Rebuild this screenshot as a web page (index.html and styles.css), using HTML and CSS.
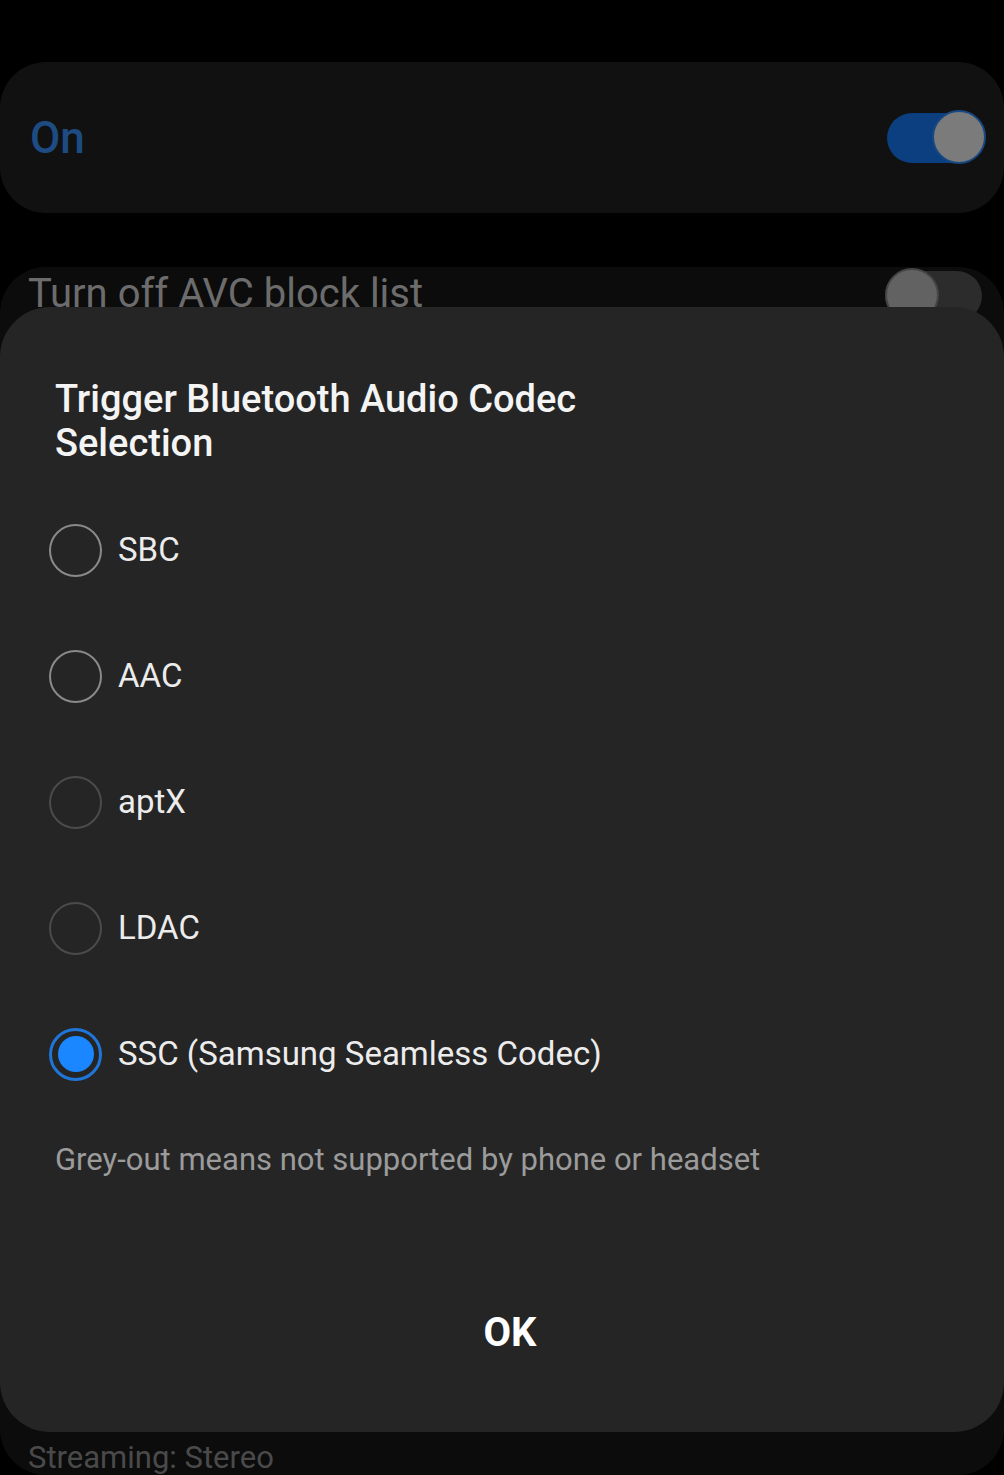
FILE: index.html
```html
<!DOCTYPE html>
<html>
<head>
<meta charset="utf-8">
<link rel="stylesheet" href="styles.css">
</head>
<body>
<div class="page">
  <div class="topbar"></div>
  <div class="card card-on">
    <span class="on-label">On</span>
    <span class="switch switch-on"><span class="thumb"></span></span>
  </div>
  <div class="card card-list">
    <div class="setting-row">
      <span class="setting-title">Turn off AVC block list</span>
      <span class="switch switch-off"><span class="thumb"></span></span>
    </div>
    <div class="hidden-space"></div>
    <div class="setting-sub">Streaming: Stereo</div>
  </div>

  <div class="dialog">
    <h1 class="dialog-title">Trigger Bluetooth Audio Codec<br>Selection</h1>
    <div class="options">
      <div class="option"><span class="radio"></span><span class="opt-label">SBC</span></div>
      <div class="option"><span class="radio"></span><span class="opt-label">AAC</span></div>
      <div class="option"><span class="radio radio-disabled"></span><span class="opt-label">aptX</span></div>
      <div class="option"><span class="radio radio-disabled"></span><span class="opt-label">LDAC</span></div>
      <div class="option"><span class="radio radio-checked"><span class="dot"></span></span><span class="opt-label">SSC (Samsung Seamless Codec)</span></div>
    </div>
    <p class="hint">Grey-out means not supported by phone or headset</p>
    <div class="actions"><span class="ok">OK</span></div>
  </div>
</div>
</body>
</html>
```
FILE: styles.css
```css
html, body {
  margin: 0;
  padding: 0;
  background: #000;
}
body {
  font-family: Roboto, "Noto Sans", "Liberation Sans", sans-serif;
  width: 1004px;
  height: 1475px;
  overflow: hidden;
}
.page {
  position: relative;
  height: 1475px;
  overflow: hidden;
}
.topbar {
  height: 62px;
}
.card {
  border-radius: 46px;
}
.card-on {
  background: #111111;
  height: 151px;
  display: flex;
  align-items: center;
  justify-content: space-between;
  padding: 0 20px 0 30px;
  box-sizing: border-box;
}
.on-label {
  color: #1d4b82;
  font-size: 44px;
  font-weight: 500;
  line-height: 1;
}
.switch {
  position: relative;
  width: 97px;
  height: 50px;
  border-radius: 25px;
  display: block;
}
.switch .thumb {
  position: absolute;
  top: -3px;
  width: 54px;
  height: 54px;
  border-radius: 50%;
  box-sizing: border-box;
}
.switch-on {
  background: #0b3f80;
}
.switch-on .thumb {
  right: -2px;
  background: #7b7b7b;
  border: 2px solid #174882;
}
.switch-off {
  background: #2c2c2c;
}
.switch-off .thumb {
  left: 0;
  background: #626262;
  border: 2px solid #454545;
}
.card-list {
  margin-top: 54px;
  background: #0c0c0c;
  height: 1208px;
  overflow: hidden;
}
.setting-row {
  display: flex;
  align-items: flex-start;
  justify-content: space-between;
  padding: 4px 22px 0 28px;
  height: 62px;
  box-sizing: border-box;
}
.setting-title {
  color: #6c6c6c;
  font-size: 40px;
  line-height: 46px;
}
.switch-off {
  margin-top: 0;
}
.hidden-space {
  height: 1111px;
}
.setting-sub {
  padding-left: 28px;
  color: #4a4a4a;
  font-size: 31px;
  line-height: 36px;
}
.dialog {
  position: absolute;
  top: 307px;
  left: 0;
  right: 0;
  height: 1125px;
  background: #252525;
  border-radius: 50px;
  padding: 70px 0 0 0;
  box-sizing: border-box;
}
.dialog-title {
  margin: 0;
  padding-left: 55px;
  font-size: 38px;
  line-height: 44px;
  font-weight: 500;
  color: #f4f4f4;
}
.options {
  margin-top: 22px;
  padding-left: 49px;
}
.option {
  height: 126px;
  display: flex;
  align-items: center;
  gap: 16px;
}
.radio {
  width: 53px;
  height: 53px;
  border-radius: 50%;
  border: 2.5px solid #8a8a8a;
  box-sizing: border-box;
  display: flex;
  align-items: center;
  justify-content: center;
  flex: none;
}
.radio-disabled {
  border-color: #4b4b4b;
}
.radio-checked {
  border: 3px solid #1f76d8;
}
.radio-checked .dot {
  width: 36px;
  height: 36px;
  border-radius: 50%;
  background: #1a86ff;
}
.opt-label {
  color: #ececec;
  font-size: 33px;
  line-height: 40px;
}
.hint {
  margin: 25px 0 0 0;
  padding-left: 55px;
  color: #9b9b9b;
  font-size: 31px;
  line-height: 36px;
}
.actions {
  margin-top: 130px;
  display: flex;
  justify-content: center;
  padding-left: 16px;
}
.ok {
  color: #ffffff;
  font-size: 40px;
  font-weight: 700;
  line-height: 50px;
}
```
